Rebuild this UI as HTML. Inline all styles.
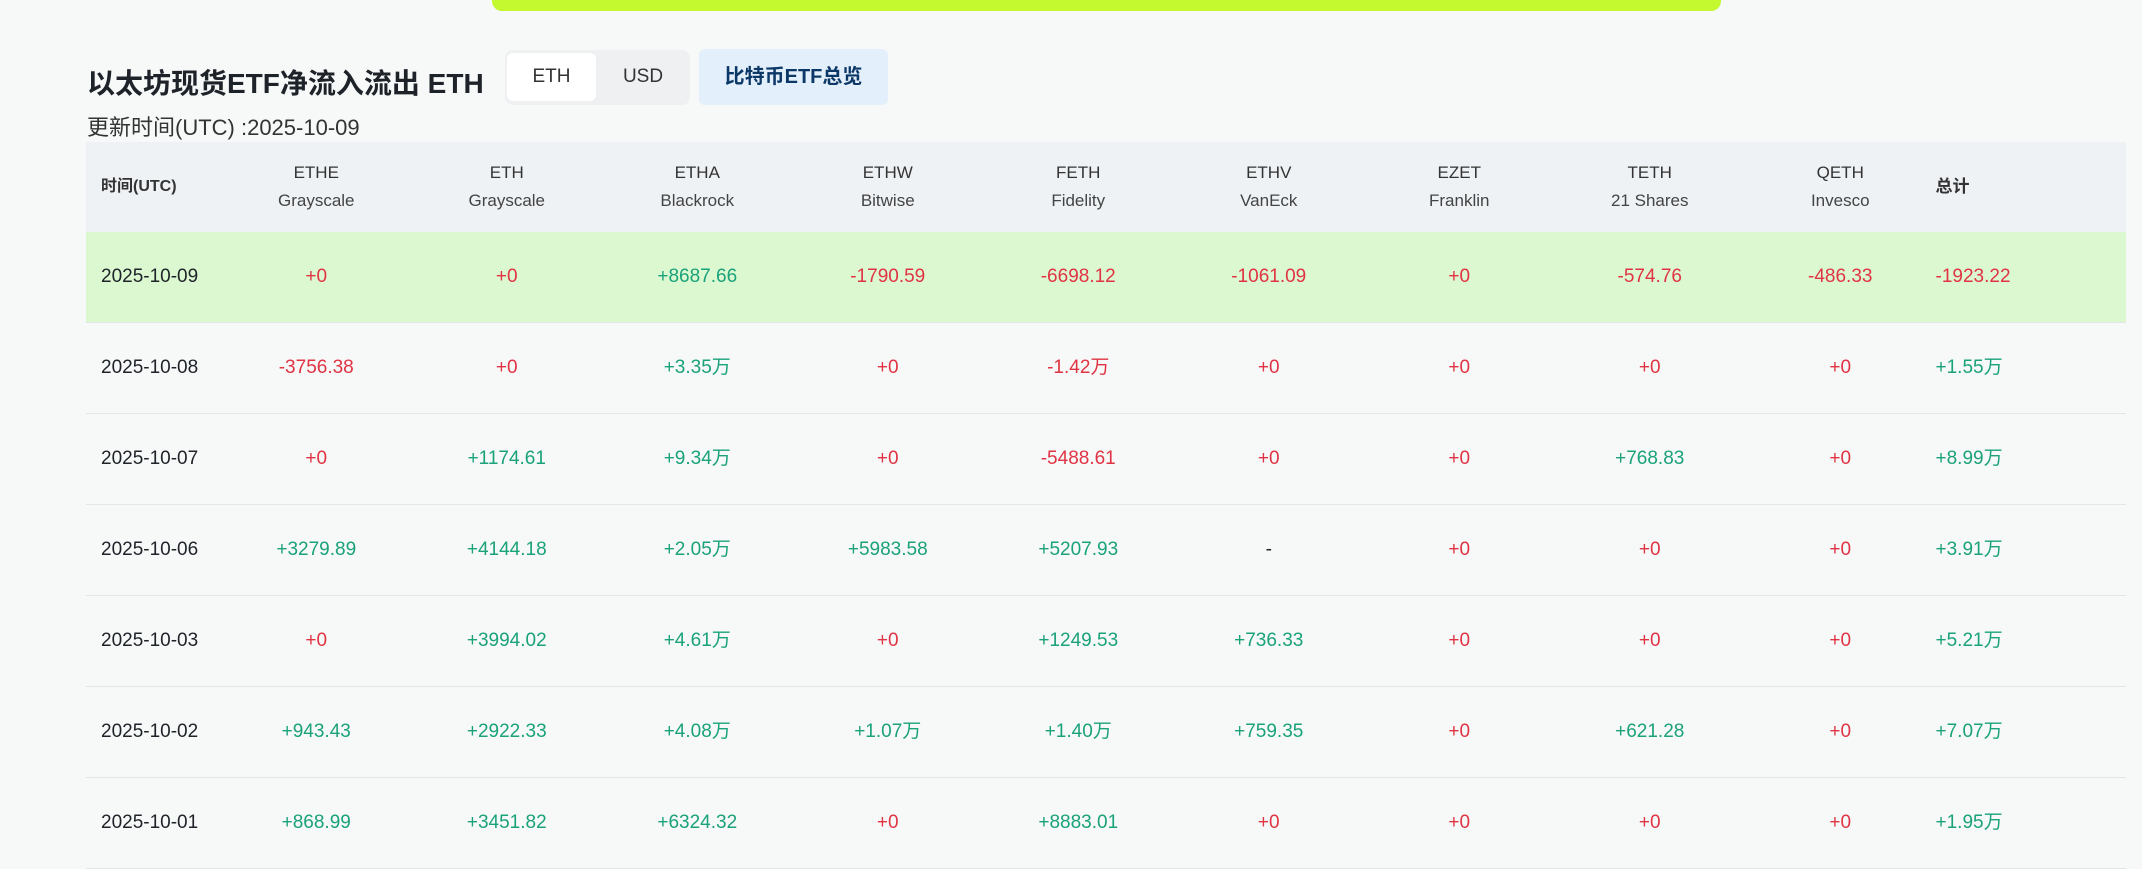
<!DOCTYPE html>
<html><head><meta charset="utf-8"><style>
body{margin:0;width:2142px;height:869px;background:#f7f8f8;font-family:"Liberation Sans","Noto Sans CJK SC",sans-serif;overflow:hidden;position:relative;color:#1e2329}
.bar{position:absolute;left:492px;top:-10px;width:1229px;height:21px;background:#c3f92e;border-radius:0 0 10px 10px}
.title{position:absolute;left:87px;top:62px;font-size:28px;font-weight:bold}
.tog{position:absolute;left:505px;top:50px;width:185px;height:55px;background:#eef0f2;border-radius:8px}
.tog div{position:absolute;top:3px;height:48px;line-height:48px;font-size:19px;text-align:center;color:#333}
.btn{position:absolute;left:699px;top:49px;width:189px;height:56px;background:#e3effa;border-radius:6px;color:#0c3868;font-weight:bold;font-size:20px;line-height:56px;text-align:center}
.sub{position:absolute;left:87px;top:110px;font-size:22px;color:#333}
.tbl{position:absolute;left:86px;top:142px;width:2040px}
.row{display:flex;height:90px;align-items:center;border-bottom:1px solid #e3e5e7;font-size:19px}
.row div{width:190.5px;text-align:center;line-height:24px}
.row div:first-child{width:135px;text-align:left;padding-left:15px;box-sizing:border-box}
.row div:last-child{text-align:left}
.hd{background:#eef2f5;border:none;font-size:17px;color:#333}
.hd div{line-height:28px}
.hd span{color:#444}
.w{line-height:0}
.g{color:#1aa27a}.r{color:#e03444}
</style></head><body>
<div class="bar"></div>
<div class="title">以太坊现货ETF净流入流出 ETH</div>
<div class="tog"><div style="left:2px;width:89px;background:#fff;border-radius:6px">ETH</div><div style="left:93px;width:90px">USD</div></div>
<div class="btn">比特币ETF总览</div>
<div class="sub">更新时间(UTC) :2025-10-09</div>
<div class="tbl">
<div class="row hd"><div style="font-weight:bold;font-size:16px">时间(UTC)</div><div>ETHE<br><span>Grayscale</span></div><div>ETH<br><span>Grayscale</span></div><div>ETHA<br><span>Blackrock</span></div><div>ETHW<br><span>Bitwise</span></div><div>FETH<br><span>Fidelity</span></div><div>ETHV<br><span>VanEck</span></div><div>EZET<br><span>Franklin</span></div><div>TETH<br><span>21 Shares</span></div><div>QETH<br><span>Invesco</span></div><div style="font-weight:bold">总计</div></div>
<div class="row" style="background:#dcf8d0"><div>2025-10-09</div><div class="r">+0</div><div class="r">+0</div><div class="g">+8687.66</div><div class="r">-1790.59</div><div class="r">-6698.12</div><div class="r">-1061.09</div><div class="r">+0</div><div class="r">-574.76</div><div class="r">-486.33</div><div class="r">-1923.22</div></div>
<div class="row"><div>2025-10-08</div><div class="r">-3756.38</div><div class="r">+0</div><div class="g">+3.35<span class="w">万</span></div><div class="r">+0</div><div class="r">-1.42<span class="w">万</span></div><div class="r">+0</div><div class="r">+0</div><div class="r">+0</div><div class="r">+0</div><div class="g">+1.55<span class="w">万</span></div></div>
<div class="row"><div>2025-10-07</div><div class="r">+0</div><div class="g">+1174.61</div><div class="g">+9.34<span class="w">万</span></div><div class="r">+0</div><div class="r">-5488.61</div><div class="r">+0</div><div class="r">+0</div><div class="g">+768.83</div><div class="r">+0</div><div class="g">+8.99<span class="w">万</span></div></div>
<div class="row"><div>2025-10-06</div><div class="g">+3279.89</div><div class="g">+4144.18</div><div class="g">+2.05<span class="w">万</span></div><div class="g">+5983.58</div><div class="g">+5207.93</div><div>-</div><div class="r">+0</div><div class="r">+0</div><div class="r">+0</div><div class="g">+3.91<span class="w">万</span></div></div>
<div class="row"><div>2025-10-03</div><div class="r">+0</div><div class="g">+3994.02</div><div class="g">+4.61<span class="w">万</span></div><div class="r">+0</div><div class="g">+1249.53</div><div class="g">+736.33</div><div class="r">+0</div><div class="r">+0</div><div class="r">+0</div><div class="g">+5.21<span class="w">万</span></div></div>
<div class="row"><div>2025-10-02</div><div class="g">+943.43</div><div class="g">+2922.33</div><div class="g">+4.08<span class="w">万</span></div><div class="g">+1.07<span class="w">万</span></div><div class="g">+1.40<span class="w">万</span></div><div class="g">+759.35</div><div class="r">+0</div><div class="g">+621.28</div><div class="r">+0</div><div class="g">+7.07<span class="w">万</span></div></div>
<div class="row"><div>2025-10-01</div><div class="g">+868.99</div><div class="g">+3451.82</div><div class="g">+6324.32</div><div class="r">+0</div><div class="g">+8883.01</div><div class="r">+0</div><div class="r">+0</div><div class="r">+0</div><div class="r">+0</div><div class="g">+1.95<span class="w">万</span></div></div>
</div>
</body></html>
